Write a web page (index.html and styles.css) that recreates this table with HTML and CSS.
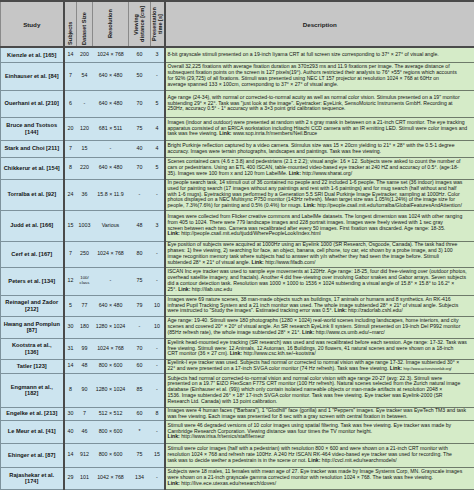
FILE: index.html
```html
<!DOCTYPE html>
<html>
<head>
<meta charset="utf-8">
<link rel="stylesheet" href="styles.css">
</head>
<body>
<table class="ds">
<colgroup>
<col class="c-study"><col class="c-subj"><col class="c-size"><col class="c-res"><col class="c-view"><col class="c-time"><col class="c-desc">
</colgroup>
<thead>
<tr>
<th class="h-study">Study</th>
<th class="h-rot"><div class="rot bottom">Subjects</div></th>
<th class="h-rot"><div class="rot bottom">Dataset Size</div></th>
<th class="h-rot"><div class="rot">Resolution</div></th>
<th class="h-rot"><div class="rot">Viewing<br>distance [cm]</div></th>
<th class="h-rot h-last"><div class="rot">Presentation<br>time [s]</div></th>
<th class="h-desc">Description</th>
</tr>
</thead>
<tbody>
<tr class="r15"><td class="study">Kienzle et al. [165]</td><td>14</td><td>200</td><td>1024 × 768</td><td>60</td><td class="last">3</td>
<td class="desc">8-bit grayscale stimuli presented on a 19-inch Iiyama CRT at full screen size corresponding to 37° × 27° of visual angle.</td></tr>

<tr class="r28"><td class="study">Einhauser et al. [84]</td><td>7</td><td>54</td><td>640 × 480</td><td>50</td><td class="last">-</td>
<td class="desc">Overall 32,225 fixations with average fixation duration as 370±293 ms and 11.9 fixations per image. The average distance of<br>subsequent fixation points on the screen is 127 pixels(19°). Authors restricted their analysis to 76° ×55° regions which accounts<br>for 92% (29,725) of all fixations. Stimuli was presented using NEC LT 157 projector at resolution 1024 × 768 at 60Hz on<br>average spanned 133 × 100cm, corresponding to 37° × 27° of visual angle.</td></tr>

<tr class="r27"><td class="study">Ouerhani et al. [210]</td><td>6</td><td>-</td><td>640 × 480</td><td>70</td><td class="last">5</td>
<td class="desc">Age range (24-34), with normal or corrected-to-normal acuity as well as normal color vision. Stimulus presented on a 19" monitor<br>subtending 29° × 22°. Task was "just look at the image". Eyetracker: EyeLink, SensoMotoric Instruments GmbH. Recording at<br>250Hz, accuracy 0.5° - 1° accuracy with a 3×3 point grid calibration sequence.</td></tr>

<tr class="r23"><td class="study">Bruce and Tsotsos<br>[144]</td><td>20</td><td>120</td><td>681 × 511</td><td>75</td><td class="last">4</td>
<td class="desc">Images (indoor and outdoor) were presented at random with 2 s gray mask in between on a 21-inch CRT monitor. The eye tracking<br>apparatus consisted of an ERICA workstation including Hitachi CCD camera with an IR emitting LED. Stimuli were color images and<br>task was free viewing. <b>Link:</b> www.sop.inria.fr/members/Neil.Bruce</td></tr>

<tr class="r17"><td class="study">Stark and Choi [211]</td><td>7</td><td>15</td><td>-</td><td>40</td><td class="last">4</td>
<td class="desc">Bright Purkinje reflection captured by a video camera. Stimulus size was 15 × 20cm yielding to 21° × 28° with the 0.5-1 degree<br>accuracy. Images were terrain photographs, landscapes and paintings. Task was free viewing.</td></tr>

<tr class="r22"><td class="study">Chikkerur et al. [154]</td><td>8</td><td>220</td><td>640 × 480</td><td>70</td><td class="last">5</td>
<td class="desc">Scenes contained cars (4.6 ± 3.8) and pedestrians (2.1 ± 2.2); visual angle: 16 × 12. Subjects were asked to count the number of<br>cars or pedestrians. Using an ETL 400 ISCAN, table-mounted video-based eye tracker at 240 HZ and accuracy of 0.5°. (age:18-<br>35). Images were 100 from x and 120 from LabelMe. <b>Link:</b> http://www.sharat.org/</td></tr>

<tr class="r31"><td class="study">Torralba et al. [92]</td><td>24</td><td>36</td><td>15.8 × 11.9</td><td>-</td><td class="last">-</td>
<td class="desc">In people search task, 14 stimuli out of 36 contained no people and 22 included 1-6 people. The same set (36 indoor) images was<br>used for painting search (17 images without any paintings and rest with 1-6 paintings) and for mug search (half without and half<br>with 1-6 mugs). Eyetracking was performed by a Generation 5.5 SRI Dual Purkinje Image Eyetracker, sampling at 1000Hz. Color<br>photos displayed on a NEC Multisync P750 monitor (143Hz refresh). Mean target size was 1.05%(1.24%) of the image size for<br>people, 7.3%(7.6%) for painting and 0.5% (0.4%) for mugs. <b>Link:</b> http://people.csail.mit.edu/torralba/GlobalFeaturesAndAttention/</td></tr>

<tr class="r31"><td class="study">Judd et al. [166]</td><td>15</td><td>1003</td><td>Various</td><td>48</td><td class="last">3</td>
<td class="desc">Images were collected from Flicker creative commons and LabelMe datasets. The longest dimension was 1024 with other ranging<br>from 405 to 1024. There were 779 landscape images and 228 portrait images. Images were freely viewed with 1 sec gray<br>screen between each two. Camera was recalibrated after every 50 images. First fixation was discarded. Age range: 18-35.<br><b>Link:</b> http://people.csail.mit.edu/tjudd/WherePeopleLook/index.html</td></tr>

<tr class="r26"><td class="study">Cerf et al. [167]</td><td>7</td><td>250</td><td>1024 × 768</td><td>80</td><td class="last">-</td>
<td class="desc">Eye position of subjects were acquired at 1000Hz using an Eyelink 1000 (SR Research, Osgoode, Canada). The task had three<br>phases: 1) free viewing, 2) searching for face, an object, banana, cell phone, toy car, etc shown by a probe image, and 3) 100<br>image recognition memory task where subjects had to answer with y/n whether they had seen the image before. Stimuli<br>subtended 28° × 21° of visual angle. <b>Link:</b> http://www.fifadb.com/</td></tr>

<tr class="r28"><td class="study">Peters et al. [134]</td><td>12</td><td class="small">100/<br>class</td><td>-</td><td>75</td><td class="last">-</td>
<td class="desc">ISCAN Inc eye tracker was used to sample eye movements at 120Hz. Age range: 18-25, four did free-viewing over (outdoor photos,<br>overhead satellite imagery, and fractals). Another 4 did free-viewing over involving Gabor snakes and Gabor arrays. Seven subjects<br>did a contour detection task. Resolution was 1000 × 1000 to 1536 × 1024 subtending a visual angle of 15.8° × 15.8° to 16.2° ×<br>25°. <b>Link:</b> http://ilab.usc.edu</td></tr>

<tr class="r21"><td class="study">Reinagel and Zador<br>[212]</td><td>5</td><td>77</td><td>640 × 480</td><td>79</td><td class="last">10</td>
<td class="desc">Images were 69 nature scenes, 38 man-made objects such as buildings, 17 animals or humans and 8 synthetics. An RK-416<br>infrared Pupil Tracking System and a 21 inch monitor was used. The whole image subtended 28° × 21° of visual angle. Subjects<br>were instructed to "Study the images". Estimated tracking error was 0.5°. <b>Link:</b> http://zadorlab.cshl.edu/</td></tr>

<tr class="r22"><td class="study">Hwang and Pomplun<br>[87]</td><td>30</td><td>180</td><td>1280 × 1024</td><td>-</td><td class="last">10</td>
<td class="desc">Age range: 19-40. Stimuli were 180 photographs (1280 × 1024) real-world scenes including landscapes, home interiors, and city<br>scenes and covered 20° × 20° of visual angle. An SR research EyeLink II system. Stimuli presented on 19-inch Del P992 monitor<br>(85Hz refresh rate), the whole image subtended 28° × 21°. <b>Link:</b> http://www.cs.umb.edu/~marc/</td></tr>

<tr class="r21"><td class="study">Kootstra et al.,<br>[136]</td><td>31</td><td>99</td><td>1024 × 768</td><td>70</td><td class="last">-</td>
<td class="desc">Eyelink head-mounted eye tracking (SR research) was used and was recalibrated before each session. Age range: 17-32. Task was<br>free viewing. Stimuli were: 12 Animals, 12 Automan, 16 Buildings, 20 flowers, 41 natural scenes and were shown on a 18-inch<br>CRT monitor (36 × 27 cm). <b>Link:</b> http://www.csc.kth.se/~kootstra/</td></tr>

<tr class="r14"><td class="study">Tatler [123]</td><td>14</td><td>48</td><td>800 × 600</td><td>60</td><td class="last">-</td>
<td class="desc">Eyelink-I eye tracker was used. Subjects had normal or corrected to normal vision with age range 17-32. Image subtended 30° ×<br>22° and were presented on a 17-inch SVGA color monitor (74 Hz refresh). Task was free viewing. <b>Link:</b> <span class="tiny">http://www.activevisionlab.org/</span></td></tr>

<tr class="r34"><td class="study">Engmann et al.,<br>[182]</td><td>8</td><td>90</td><td>1280 × 1024</td><td>85</td><td class="last">-</td>
<td class="desc">Subjects had normal or corrected-to-normal vision and normal color vision with age range 20-27 (avg: 22.3). Stimuli were<br>presented on a 19.7" EIZO FlexScan F77S CRT monitor (100 Hz refresh). Natural scenes selected from the Zurich natural image<br>database (Einhauser et al. (99)) which only contain isolated nameable objects or man-made artifacts at resolution 2048 ×<br>1536. Image subtended 26° × 18° 17-inch SVGA color monitor. Task was free viewing. Eye tracker was Eyelink-2000 (SR<br>Research Ltd. Canada) with 13 point calibration.</td></tr>

<tr class="r13"><td class="study">Engelke et al. [213]</td><td>30</td><td>7</td><td>512 × 512</td><td>60</td><td class="last">8</td>
<td class="desc">Images were 4 human faces ("Barbara"), 1 "Glodhill" face (gorilla) and 1 "Peppers" images. Eye tracker was EyeTech TM3 and task<br>was free viewing. Each image was presented for 8 sec with a gray screen with central fixation in between.</td></tr>

<tr class="r23"><td class="study">Le Meur et al. [41]</td><td>40</td><td>46</td><td>800 × 600</td><td>*</td><td class="last">-</td>
<td class="desc">Stimuli were 46 degraded versions of 10 color images using spatial filtering. Task was free viewing. Eye tracker was made by<br>Cambridge Research Corporation. Viewing distance was four times the TV monitor height.<br><b>Link:</b> http://www.irisa.fr/temics/staff/lemeur</td></tr>

<tr class="r24"><td class="study">Ehinger et al. [87]</td><td>14</td><td>912</td><td>800 × 600</td><td>75</td><td class="last">15</td>
<td class="desc">Stimuli were color images (half with a pedestrian) with resolution 800 × 600 and were shown on a 21-inch CRT monitor with<br>resolution 1024 × 768 and refresh rate 100Hz. A 240 Hz ISCAN RK-464 video-based eye tracker was used for recording. The<br>task was to decide wether a pedestrain is in the scene or not. <b>Link:</b> http://cvcl.mit.edu/searchmodels/</td></tr>

<tr class="r22"><td class="study">Rajashekar et al.<br>[174]</td><td>29</td><td>101</td><td>1042 × 768</td><td>134</td><td class="last">-</td>
<td class="desc">Subjects were 18 males, 11 females with mean age of 27. Eye tracker was made by Image Systems Corp, MN. Grayscale images<br>were shown on a 21-inch grayscale gamma corrected monitor with resolution 1024 × 768. The task was free viewing.<br><b>Link:</b> http://live.ece.utexas.edu/research/doves/</td></tr>
</tbody>
</table>
</body>
</html>
```

FILE: styles.css
```css
html, body {
  margin: 0;
  padding: 0;
  background: #ffffff;
}

.ds {
  width: 474px;
  table-layout: fixed;
  border-collapse: collapse;
  font-family: "Liberation Sans", Arial, sans-serif;
  color: #141414;
  border-top: 2px solid #4a4a4a;
}

.c-study { width: 63px; }
.c-subj { width: 13px; }
.c-size { width: 16px; }
.c-res { width: 36px; }
.c-view { width: 22px; }
.c-time { width: 14px; }
.c-desc { width: 310px; }

thead th {
  background: #c6c6c6;
  height: 44px;
  padding: 0;
  border-right: 1px solid #8a8a8a;
  border-bottom: 2px solid #4a4a4a;
  font-weight: bold;
  font-size: 6.2px;
  color: #1a1a1a;
}

.h-study {
  border-right: 2px solid #4a4a4a;
  border-left: 1px solid #8a8a8a;
}

.h-last {
  border-right: 2px solid #4a4a4a;
}

.h-desc {
  border-right: 1px solid #8a8a8a;
}

.rot {
  writing-mode: vertical-rl;
  transform: rotate(180deg);
  height: 44px;
  margin: 0 auto;
  text-align: center;
  line-height: 6.2px;
  font-size: 5.6px;
  white-space: nowrap;
}

.rot.bottom {
  text-align: start;
  padding-top: 1px;
  height: 43px;
}

tbody tr.r13 { height: 13px; }
tbody tr.r14 { height: 14px; }
tbody tr.r15 { height: 15px; }
tbody tr.r17 { height: 17px; }
tbody tr.r21 { height: 21px; }
tbody tr.r22 { height: 22px; }
tbody tr.r23 { height: 23px; }
tbody tr.r24 { height: 24px; }
tbody tr.r26 { height: 26px; }
tbody tr.r27 { height: 27px; }
tbody tr.r28 { height: 28px; }
tbody tr.r31 { height: 31px; }
tbody tr.r34 { height: 34px; }

tbody td {
  background: #cce4ef;
  font-size: 5.3px;
  line-height: 5.8px;
  padding: 0;
  text-align: center;
  vertical-align: middle;
  border-bottom: 1px solid #7d929c;
  white-space: nowrap;
  overflow: hidden;
}

tbody td.study {
  font-weight: bold;
  font-size: 5.7px;
  line-height: 6.2px;
  border-right: 2px solid #4a4a4a;
  border-left: 1px solid #7d929c;
}

tbody td.small {
  font-size: 4.4px;
  line-height: 4.8px;
}

tbody td.last {
  border-right: 2px solid #4a4a4a;
}

tbody td.desc {
  background: #d5ebc8;
  text-align: left;
  padding: 0 2px;
  font-size: 5.15px;
  line-height: 5.8px;
  border-right: 1px solid #7d8c78;
  border-bottom: 1px solid #6e7a6a;
}

.desc b {
  font-weight: bold;
}

.tiny {
  font-size: 3.6px;
}
```
